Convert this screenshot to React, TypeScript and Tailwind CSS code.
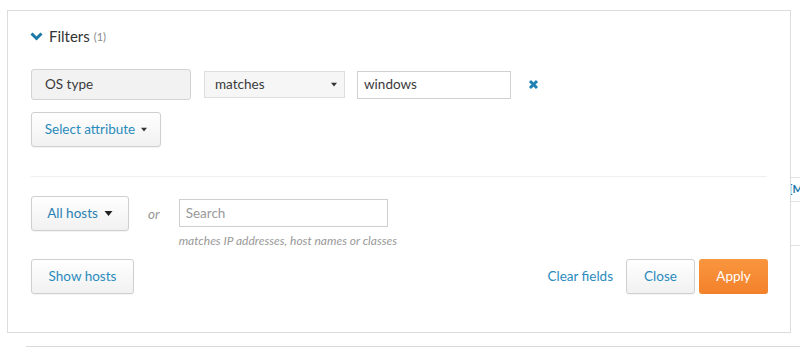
import React from "react";

const btn =
  "flex items-center justify-center rounded-[3px] border border-[#cfcfcf] bg-gradient-to-b from-white to-[#f1f1f1] shadow-[0_1px_1px_rgba(0,0,0,0.05)]";

const Caret = ({ className = "" }: { className?: string }) => (
  <svg width="8" height="5" viewBox="0 0 8 5" className={className} aria-hidden>
    <path d="M0 0h8L4 5z" fill="currentColor" />
  </svg>
);

export default function App() {
  return (
    <div
      className="w-[800px] h-[348px] bg-white overflow-hidden text-[#333]"
      style={{ fontFamily: "Lato, 'Open Sans', sans-serif" }}
    >
      <div className="flex">
        {/* Filters panel */}
        <div className="ml-[7px] mt-[10px] w-[784px] h-[323px] shrink-0 border border-[#dcdcdc] bg-white px-[23px]">
          {/* Header */}
          <div className="flex items-center mt-[19px] h-[12px]">
            <svg width="13" height="9" viewBox="0 0 13 9" className="ml-[-3px] translate-x-[2px]" aria-hidden>
              <path d="M1.5 1.5l5 5 5-5" fill="none" stroke="#1a78a6" strokeWidth="3" />
            </svg>
            <span className="ml-[8px] text-[15px] text-[#333]">Filters</span>
            <span className="ml-[4px] text-[11px] text-[#888] mt-[2px]">(1)</span>
          </div>

          {/* Rule row */}
          <div className="flex items-center mt-[27px] h-[31px]">
            <div className="flex items-center w-[160px] h-[31px] rounded-[3px] border border-[#d3d3d3] bg-[#f2f2f2] pl-[13px] text-[13.5px] text-[#3a3a3a]">
              OS type
            </div>
            <div className="ml-[13px] flex items-center justify-between w-[141px] h-[27px] border border-[#dedede] bg-[#f6f6f6] pl-[10px] pr-[7px] text-[13.5px] text-[#3a3a3a]">
              matches
              <Caret className="text-[#333] w-[6px]" />
            </div>
            <div className="ml-[12px] flex items-center w-[154px] h-[28px] border border-[#d0d0d0] bg-white pl-[6px] text-[13.5px] text-[#3a3a3a]">
              windows
            </div>
            <svg width="11" height="11" viewBox="0 0 11 11" className="ml-[17px]" aria-hidden>
              <path d="M2 2l7 7M9 2l-7 7" stroke="#1f80b4" strokeWidth="3" />
            </svg>
          </div>

          <button className={`${btn} mt-[12px] w-[130px] h-[35px] text-[13.5px] text-[#2a8bbd] gap-[6px]`}>
            Select attribute
            <Caret className="text-[#333] w-[6px]" />
          </button>

          {/* Divider */}
          <div className="mt-[29px] border-t border-[#efefef]" />

          {/* Host row */}
          <div className="flex items-start mt-[19px]">
            <button className={`${btn} w-[98px] h-[35px] text-[13.5px] text-[#2a80b2] gap-[6px]`}>
              All hosts
              <Caret className="text-[#222] w-[9px]" />
            </button>
            <span className="ml-[19px] mt-[8px] text-[13.5px] italic text-[#999]">or</span>
            <div className="ml-[19px] mt-[3px] flex flex-col">
              <div className="flex items-center w-[209px] h-[28px] border border-[#cfcfcf] bg-white pl-[6px] text-[13.5px] text-[#999]">
                Search
              </div>
              <span className="mt-[5px] text-[12px] italic text-[#999]">
                matches IP addresses, host names or classes
              </span>
            </div>
          </div>

          {/* Actions */}
          <div className="flex items-center mt-[9px]">
            <button className={`${btn} w-[103px] h-[35px] text-[13.5px] text-[#2a8bbd]`}>
              Show hosts
            </button>
            <a className="ml-auto text-[13.5px] text-[#2a8bbd]">Clear fields</a>
            <button className={`${btn} ml-[13px] w-[69px] h-[35px] text-[13.5px] text-[#2a8bbd]`}>
              Close
            </button>
            <button className="ml-[4px] mr-[-1px] flex items-center justify-center w-[69px] h-[35px] rounded-[3px] bg-gradient-to-b from-[#f9963f] to-[#f3812a] text-[13.5px] text-white">
              Apply
            </button>
          </div>
        </div>

        {/* Table behind panel */}
        <div className="w-[9px] overflow-hidden">
          <div className="mt-[177px] border-t border-[#e2e2e2] h-[24px] flex items-center">
            <span className="ml-[-2px] text-[11px] font-bold text-[#2278a8]">[M</span>
          </div>
          <div className="border-t border-[#e2e2e2] h-[44px]" />
          <div className="border-t border-[#e2e2e2]" />
        </div>
      </div>

      <div className="ml-[26px] mt-[13px] border-t border-[#dadada]" />
    </div>
  );
}
